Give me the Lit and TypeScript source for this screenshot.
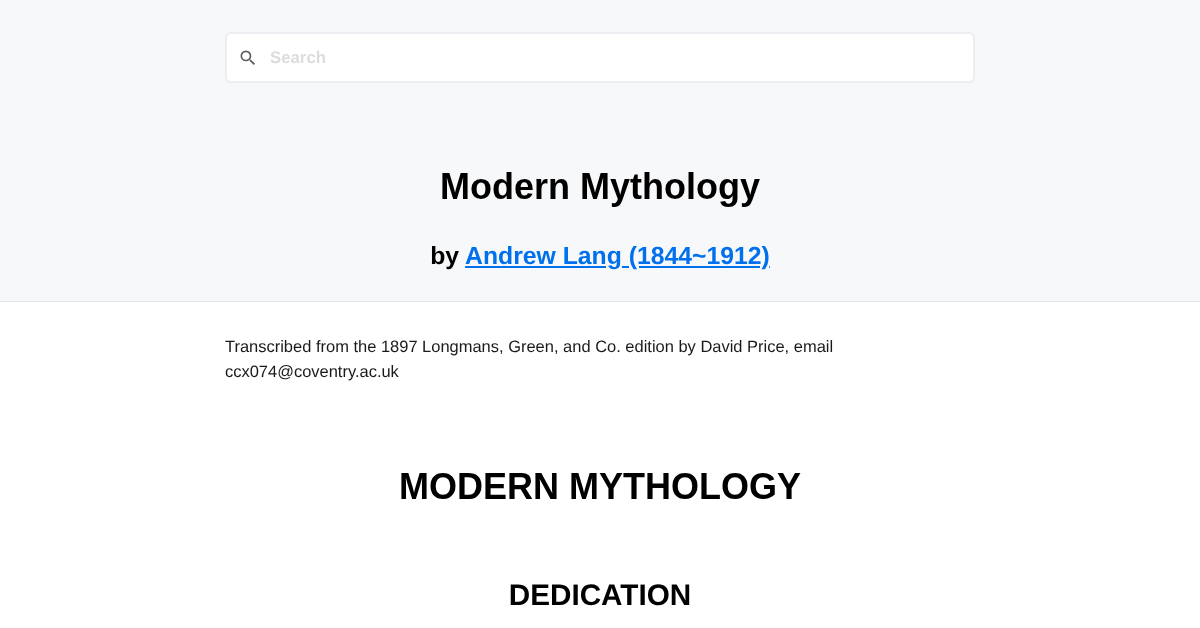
import { LitElement, html, css } from "lit";
import { customElement } from "lit/decorators.js";

@customElement("app-root")
export class AppRoot extends LitElement {
  static styles = css`
    :host { display: block; height: 628px; overflow: hidden; font-family: "Liberation Sans", Arial, sans-serif; color: #000; background: #fff; text-rendering: geometricPrecision; }
    .top { background: #f7f8fa; border-bottom: 1px solid #e6e7ea; padding-top: 32px; box-sizing: border-box; height: 302px; }
    .wrap { width: 750px; margin: 0 auto; will-change: transform; }
    .search { height: 51px; box-sizing: border-box; border: 2px solid #eceef1; border-radius: 6px; background: #fff; display: flex; align-items: center; padding-left: 11px; gap: 12px; }
    .search svg { width: 20px; height: 20px; fill: #5f5f5f; flex: none; }
    .search span { font-size: 16.8px; line-height: 20px; padding-top: 1px; font-weight: 700; color: #dcdcdc; }
    h1 { font-size: 36px; line-height: 42px; font-weight: 700; text-align: center; margin: 0; text-rendering: auto; }
    .t1 { margin-top: 83px; }
    .by { font-size: 24.75px; line-height: 28px; font-weight: 700; text-align: center; margin: 35px 0 0; }
    a { color: #0070ec; text-decoration: underline; }
    .body { padding-top: 33px; }
    p { margin: 0; font-size: 16.48px; line-height: 25px; color: #1a1a1a; width: 640px; }
    .t2 { margin-top: 81px; }
    h2 { font-size: 29.7px; line-height: 35px; font-weight: 700; text-align: center; margin: 70px 0 0; }
  `;
  render() {
    return html`
      <div class="top"><div class="wrap">
        <div class="search">
          <svg viewBox="0 0 24 24"><path d="M15.5 14h-.79l-.28-.27A6.47 6.47 0 0 0 16 9.5 6.5 6.5 0 1 0 9.5 16c1.61 0 3.09-.59 4.23-1.57l.27.28v.79l5 4.99L20.49 19l-4.99-5zm-6 0C7.01 14 5 11.99 5 9.5S7.01 5 9.5 5 14 7.01 14 9.5 11.99 14 9.5 14z"/></svg>
          <span>Search</span>
        </div>
        <h1 class="t1">Modern Mythology</h1>
        <div class="by">by <a href="#">Andrew Lang (1844~1912)</a></div>
      </div></div>
      <div class="body"><div class="wrap">
        <p>Transcribed from the 1897 Longmans, Green, and Co. edition by David Price, email ccx074@coventry.ac.uk</p>
        <h1 class="t2">MODERN MYTHOLOGY</h1>
        <h2>DEDICATION</h2>
      </div></div>
    `;
  }
}
